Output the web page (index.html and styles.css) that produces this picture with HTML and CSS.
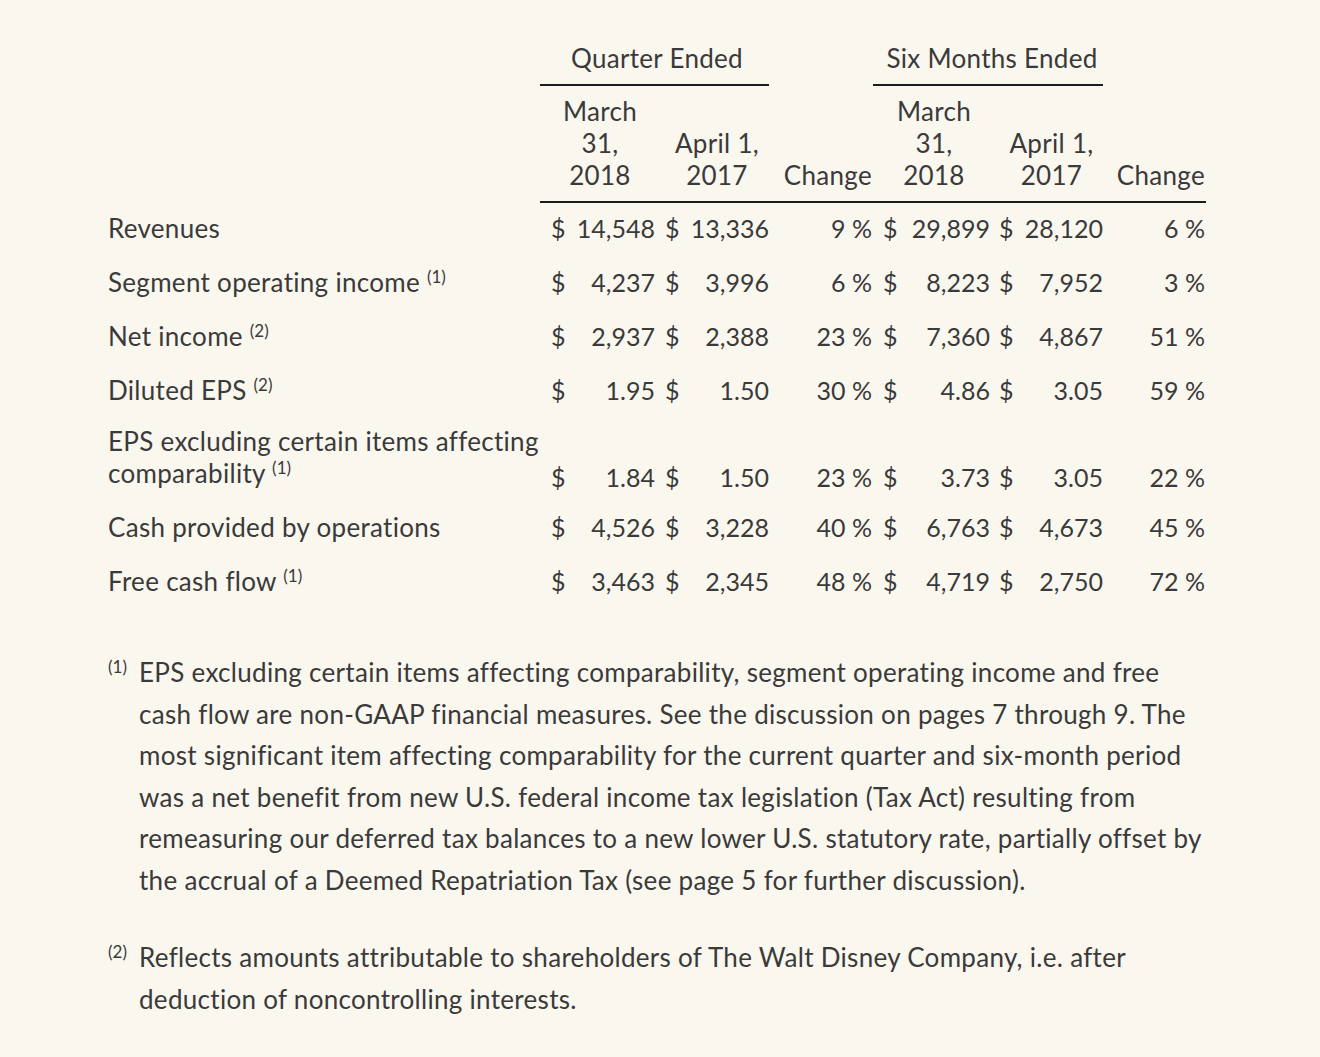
FILE: index.html
```html
<!DOCTYPE html>
<html lang="en">
<head>
<meta charset="utf-8">
<title>Financial Highlights</title>
<link rel="stylesheet" href="styles.css">
</head>
<body>
<main class="page">
  <section class="fin-table">
    <div class="cell label-head"></div>
    <div class="cell group q-group"><span>Quarter Ended</span></div>
    <div class="cell group-gap"></div>
    <div class="cell group s-group"><span>Six Months Ended</span></div>
    <div class="cell group-gap"></div>

    <div class="cell label-head"></div>
    <div class="cell colhead c1">March<br>31,<br>2018</div>
    <div class="cell colhead c2">April 1,<br>2017</div>
    <div class="cell colhead c3 chg">Change</div>
    <div class="cell colhead c4">March<br>31,<br>2018</div>
    <div class="cell colhead c5">April 1,<br>2017</div>
    <div class="cell colhead c6 chg">Change</div>

    <div class="cell label">Revenues</div>
    <div class="cell amt c1"><span>$</span><span>14,548</span></div>
    <div class="cell amt c2"><span>$</span><span>13,336</span></div>
    <div class="cell pct c3">9&nbsp;%</div>
    <div class="cell amt c4"><span>$</span><span>29,899</span></div>
    <div class="cell amt c5"><span>$</span><span>28,120</span></div>
    <div class="cell pct c6">6&nbsp;%</div>

    <div class="cell label">Segment operating income <sup>(1)</sup></div>
    <div class="cell amt c1"><span>$</span><span>4,237</span></div>
    <div class="cell amt c2"><span>$</span><span>3,996</span></div>
    <div class="cell pct c3">6&nbsp;%</div>
    <div class="cell amt c4"><span>$</span><span>8,223</span></div>
    <div class="cell amt c5"><span>$</span><span>7,952</span></div>
    <div class="cell pct c6">3&nbsp;%</div>

    <div class="cell label">Net income <sup>(2)</sup></div>
    <div class="cell amt c1"><span>$</span><span>2,937</span></div>
    <div class="cell amt c2"><span>$</span><span>2,388</span></div>
    <div class="cell pct c3">23&nbsp;%</div>
    <div class="cell amt c4"><span>$</span><span>7,360</span></div>
    <div class="cell amt c5"><span>$</span><span>4,867</span></div>
    <div class="cell pct c6">51&nbsp;%</div>

    <div class="cell label">Diluted EPS <sup>(2)</sup></div>
    <div class="cell amt c1"><span>$</span><span>1.95</span></div>
    <div class="cell amt c2"><span>$</span><span>1.50</span></div>
    <div class="cell pct c3">30&nbsp;%</div>
    <div class="cell amt c4"><span>$</span><span>4.86</span></div>
    <div class="cell amt c5"><span>$</span><span>3.05</span></div>
    <div class="cell pct c6">59&nbsp;%</div>

    <div class="cell label two-line">EPS excluding certain items affecting<br>comparability <sup>(1)</sup></div>
    <div class="cell amt c1 low"><span>$</span><span>1.84</span></div>
    <div class="cell amt c2 low"><span>$</span><span>1.50</span></div>
    <div class="cell pct c3 low">23&nbsp;%</div>
    <div class="cell amt c4 low"><span>$</span><span>3.73</span></div>
    <div class="cell amt c5 low"><span>$</span><span>3.05</span></div>
    <div class="cell pct c6 low">22&nbsp;%</div>

    <div class="cell label">Cash provided by operations</div>
    <div class="cell amt c1"><span>$</span><span>4,526</span></div>
    <div class="cell amt c2"><span>$</span><span>3,228</span></div>
    <div class="cell pct c3">40&nbsp;%</div>
    <div class="cell amt c4"><span>$</span><span>6,763</span></div>
    <div class="cell amt c5"><span>$</span><span>4,673</span></div>
    <div class="cell pct c6">45&nbsp;%</div>

    <div class="cell label">Free cash flow <sup>(1)</sup></div>
    <div class="cell amt c1"><span>$</span><span>3,463</span></div>
    <div class="cell amt c2"><span>$</span><span>2,345</span></div>
    <div class="cell pct c3">48&nbsp;%</div>
    <div class="cell amt c4"><span>$</span><span>4,719</span></div>
    <div class="cell amt c5"><span>$</span><span>2,750</span></div>
    <div class="cell pct c6">72&nbsp;%</div>
  </section>

  <section class="notes">
    <div class="note">
      <sup class="mark">(1)</sup>
      <p>EPS excluding certain items affecting comparability, segment operating income and free<br>cash flow are non-GAAP financial measures. See the discussion on pages 7 through 9. The<br>most significant item affecting comparability for the current quarter and six-month period<br>was a net benefit from new U.S. federal income tax legislation (Tax Act) resulting from<br>remeasuring our deferred tax balances to a new lower U.S. statutory rate, partially offset by<br>the accrual of a Deemed Repatriation Tax (see page 5 for further discussion).</p>
    </div>
    <div class="note">
      <sup class="mark">(2)</sup>
      <p>Reflects amounts attributable to shareholders of The Walt Disney Company, i.e. after<br>deduction of noncontrolling interests.</p>
    </div>
  </section>
</main>
</body>
</html>
```

FILE: styles.css
```css
html, body {
  margin: 0;
  padding: 0;
  background: #faf7ef;
}

body {
  font-family: "Lato", "Noto Sans", sans-serif;
  font-size: 26px;
  letter-spacing: 0.3px;
  color: #3a3a3a;
}

.page {
  padding: 42px 0 0 108px;
}

.fin-table {
  display: grid;
  grid-template-columns: 432px 120px 114px 99px 122px 113px 98px;
  line-height: 32px;
}

.cell {
  box-sizing: border-box;
}

.group {
  grid-column: span 2;
  text-align: center;
  padding-bottom: 10px;
  margin-right: 5px;
  border-bottom: 2px solid #1c1c1c;
}

.q-group {
  padding-left: 5px;
}

.s-group {
  padding-left: 8px;
}

.colhead {
  align-self: stretch;
  display: flex;
  flex-direction: column;
  justify-content: flex-end;
  text-align: center;
  padding: 9px 0 10px;
  border-bottom: 2px solid #1c1c1c;
}

.colhead.chg {
  text-align: right;
  padding-right: 1px;
}

.label {
  padding: 9px 0 13px;
}

.label.two-line {
  padding-top: 6px;
  white-space: nowrap;
}

.label sup,
.mark {
  font-size: 17px;
  letter-spacing: 0;
  line-height: 0;
  vertical-align: 0;
  position: relative;
  top: -9px;
}

.amt,
.pct {
  align-self: end;
  font-size: 25px;
  letter-spacing: 0;
  padding: 9px 5px 13px;
}

.amt.low,
.pct.low {
  padding-bottom: 9px;
}

.amt {
  display: flex;
  justify-content: space-between;
}

.amt.c1 { padding-left: 11px; }
.amt.c4 { padding-left: 10px; }
.amt.c5 { padding-left: 4px; }

.pct {
  text-align: right;
  padding-right: 1px;
}

.notes {
  margin-top: 42px;
  line-height: 41.5px;
}

.note {
  display: flex;
  align-items: flex-start;
  margin-bottom: 36px;
}

.note .mark {
  width: 31px;
  flex: none;
  line-height: 41.5px;
  top: -6px;
}

.note p {
  margin: 0;
}
```
